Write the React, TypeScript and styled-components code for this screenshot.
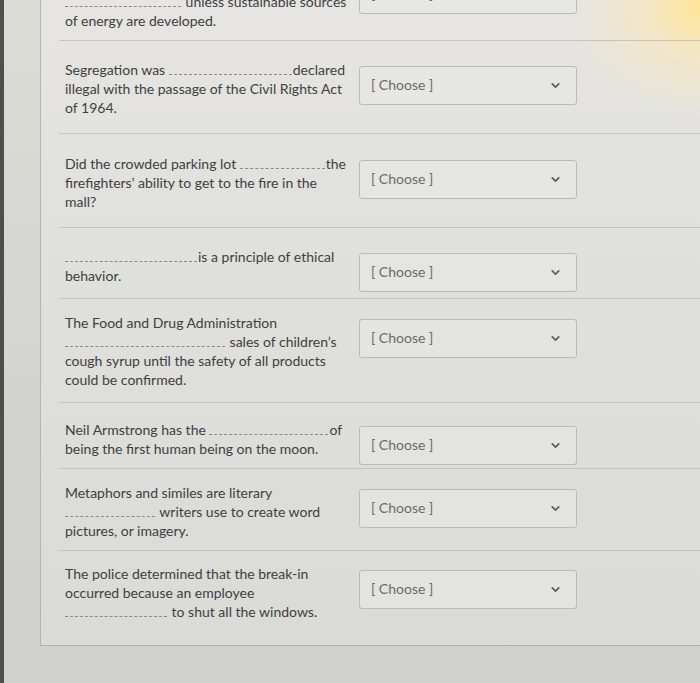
import React from 'react';
import styled, { createGlobalStyle } from 'styled-components';
import { ChevronDown } from 'lucide-react';

const GlobalStyle = createGlobalStyle`
  html, body {
    margin: 0;
    padding: 0;
    background: #d2d3ce;
  }
  body {
    font-family: Lato, "Noto Sans", "Liberation Sans", sans-serif;
    color: #3f4042;
    overflow: hidden;
  }
`;

const Screen = styled.div`
  display: flex;
  height: 683px;
  overflow: hidden;
  border-left: 4px solid #4e4f4c;
  background: linear-gradient(180deg, #dcdcd7 0%, #d3d4cf 60%, #d0d1cc 100%);
`;

const Page = styled.div`
  flex: 1;
  padding-left: 36px;
  margin-top: -44px;
`;

const QuestionBox = styled.div`
  border-left: 1px solid #b4b5b0;
  border-bottom: 1px solid #b0b1ac;
  padding-bottom: 12px;
  background:
    radial-gradient(ellipse 130px 110px at 660px 51px, rgba(255, 228, 150, 1), rgba(252, 232, 185, 0.6) 45%, rgba(240, 232, 218, 0) 100%),
    linear-gradient(180deg, #e7e6e2 0%, #e0e0dc 40%, #dadad6 100%);
`;

const Row = styled.div<{ $pt: number; $pb: number; $last?: boolean }>`
  display: grid;
  grid-template-columns: 283px 218px;
  column-gap: 11px;
  align-items: start;
  margin-left: 18px;
  padding: ${({ $pt, $pb }) => `${$pt}px 0 ${$pb}px 6px`};
  border-bottom: ${({ $last }) => ($last ? 'none' : '1px solid #c4c5c0')};
`;

const Prompt = styled.div<{ $offset?: number }>`
  margin-top: ${({ $offset }) => $offset ?? 0}px;
  font-size: 14px;
  line-height: 19px;
`;

const Blank = styled.span<{ $w: number }>`
  display: inline-block;
  width: ${({ $w }) => $w}px;
  height: 13px;
  border-bottom: 1px dashed #8a8b8d;
  margin-right: 1px;
  vertical-align: baseline;
`;

const Select = styled.div`
  display: flex;
  align-items: center;
  justify-content: space-between;
  box-sizing: border-box;
  height: 39px;
  margin-top: 6px;
  padding: 0 14px 3px 11px;
  border: 1px solid #babbb6;
  border-radius: 3px;
  background: rgba(232, 232, 228, 0.6);
  color: #6a6b6d;
  font-size: 14px;
`;

const Chevron = styled(ChevronDown)`
  color: #5c5d5f;
  margin-top: 3px;
`;

function Choose() {
  return (
    <Select>
      <span>[ Choose ]</span>
      <Chevron size={13} strokeWidth={3.2} />
    </Select>
  );
}

type Item = { parts: (string | number)[]; pt: number; pb: number; offset?: number };

// the first prompt continues from a line that scrolled above the window
const items: Item[] = [
  { parts: [116, ' unless sustainable sources of energy are developed.'], pt: 13, pb: 10, offset: 23 },
  { parts: ['Segregation was ', 123, 'declared illegal with the passage of the Civil Rights Act of 1964.'], pt: 19, pb: 16 },
  { parts: ['Did the crowded parking lot ', 85, 'the firefighters\u2019 ability to get to the fire in the mall?'], pt: 20, pb: 16 },
  { parts: [132, 'is a principle of ethical behavior.'], pt: 19, pb: 6 },
  { parts: ['The Food and Drug Administration ', 160, ' sales of children\u2019s cough syrup until the safety of all products could be confirmed.'], pt: 14, pb: 13 },
  { parts: ['Neil Armstrong has the ', 119, 'of being the first human being on the moon.'], pt: 17, pb: 3 },
  { parts: ['Metaphors and similes are literary ', 90, ' writers use to create word pictures, or imagery.'], pt: 14, pb: 10 },
  { parts: ['The police determined that the break-in occurred because an employee ', 102, ' to shut all the windows.'], pt: 13, pb: 12 },
];

export default function App() {
  return (
    <>
      <GlobalStyle />
      <Screen>
        <Page>
          <QuestionBox>
            {items.map((item, i) => (
              <Row key={i} $pt={item.pt} $pb={item.pb} $last={i === items.length - 1}>
                <Prompt $offset={item.offset}>
                  {item.parts.map((p, j) =>
                    typeof p === 'number' ? <Blank key={j} $w={p} /> : <React.Fragment key={j}>{p}</React.Fragment>
                  )}
                </Prompt>
                <Choose />
              </Row>
            ))}
          </QuestionBox>
        </Page>
      </Screen>
    </>
  );
}
